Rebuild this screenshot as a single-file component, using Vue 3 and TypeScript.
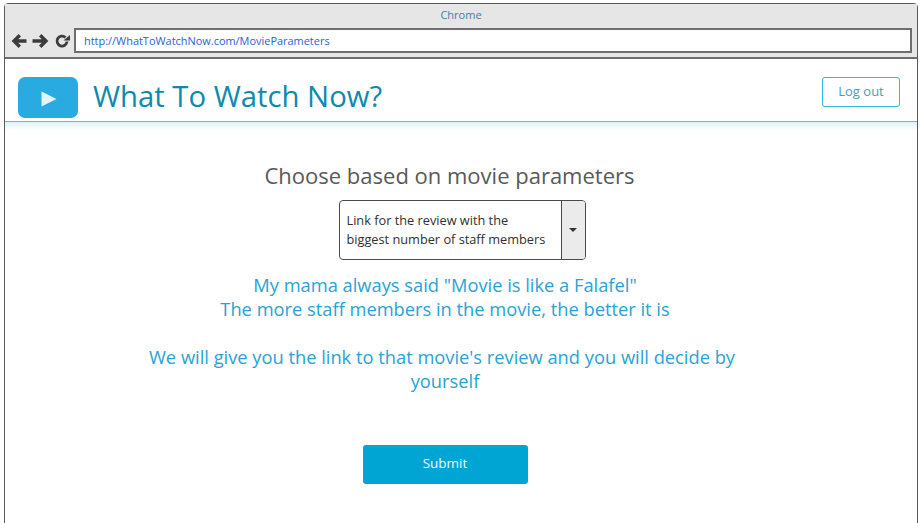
<script setup lang="ts">
const lines: string[] = ['My mama always said "Movie is like a Falafel"', 'The more staff members in the movie, the better it is']
</script>

<template>
  <div class="page">
    <div class="window">
      <div class="chrome">
        <div class="chrome-title">Chrome</div>
        <div class="nav">
          <svg class="nav-icons" width="62" height="18" viewBox="0 0 62 18">
            <path d="M16.500 9H4.500M9.800 3.200 4 9l5.800 5.800" fill="none" stroke="#3c3c3c" stroke-width="3.400" />
            <path d="M22.500 9H35.500M30.200 3.200 36 9l-5.800 5.800" fill="none" stroke="#3c3c3c" stroke-width="3.400" />
            <path d="M57 9.500A5 5 0 1 1 55.500 5.500" fill="none" stroke="#3c3c3c" stroke-width="2.800" />
            <path d="M53.500 8.500 60 8.500 60 3Z" fill="#3c3c3c" />
          </svg>
          <div class="address">http://WhatToWatchNow.com/MovieParameters</div>
        </div>
      </div>
      <header class="header">
        <div class="brand">
          <div class="logo">
            <svg class="play" width="16" height="16" viewBox="0 0 16 16"><path d="M0.500 0.500 15.500 8 0.500 15.500Z" fill="#e4f4fb" /></svg>
          </div>
          <h1 class="title">What To Watch Now?</h1>
        </div>
        <button class="logout" type="button">Log out</button>
      </header>
      <div class="shade"></div>
      <main class="content">
        <h2 class="heading">Choose based on movie parameters</h2>
        <div class="select">
          <div class="select-text">Link for the review with the<br />biggest number of staff members</div>
          <div class="select-arrow"><span class="caret"></span></div>
        </div>
        <div class="message first">
          <p v-for="line in lines" :key="line">{{ line }}</p>
        </div>
        <p class="message note">We will give you the link to that movie's review and you will decide by yourself</p>
        <button class="submit" type="button">Submit</button>
      </main>
    </div>
  </div>
</template>

<style scoped>
.page {
  width: 923px;
  height: 523px;
  box-sizing: border-box;
  padding: 3px 5px 0 4px;
  overflow: hidden;
  background: #fff;
  font-family: "Open Sans", sans-serif;
}
.window {
  height: 530px;
  box-sizing: border-box;
  border: 1.500px solid #5a5a5a;
  border-radius: 4px 4px 0 0;
  background: #fff;
}
.chrome {
  height: 55px;
  box-sizing: border-box;
  background: #e6e6e6;
  border-bottom: 2px solid #6e6e6e;
}
.chrome-title {
  height: 24px;
  line-height: 22px;
  text-align: center;
  font-size: 11px;
  color: #3a80a8;
}
.nav {
  display: flex;
  align-items: center;
  padding-right: 5px;
}
.nav-icons {
  margin-left: 5px;
  flex: none;
  margin-right: 2px;
}
.address {
  flex: 1;
  height: 25px;
  box-sizing: border-box;
  border: 2px solid #6f6f6f;
  background: #fff;
  padding-left: 8px;
  line-height: 21px;
  font-size: 10.950px;
  color: #2a62d8;
}
.header {
  height: 63px;
  box-sizing: border-box;
  display: flex;
  align-items: flex-start;
  justify-content: space-between;
  padding: 18px 17px 0 13px;
  border-bottom: 1px solid #55c1e2;
}
.brand {
  display: flex;
  align-items: center;
  gap: 15px;
}
.logo {
  width: 60px;
  height: 41px;
  border-radius: 7px;
  background: #29abe2;
  display: flex;
  align-items: center;
  justify-content: center;
}
.play {
  margin: 2px 0 0 2px;
}
.title {
  margin: 0 0 2px;
  font-size: 29.300px;
  font-weight: 400;
  line-height: 39px;
  color: #0d8ab0;
}
.logout {
  width: 78px;
  height: 30px;
  padding: 0 0 2px;
  border: 1px solid #33b5dc;
  border-radius: 3px;
  background: #fff;
  color: #4a9cb8;
  font-family: inherit;
  font-size: 13px;
}
.shade {
  height: 8px;
  background: linear-gradient(#dff1f7, #fff);
}
.content {
  display: flex;
  flex-direction: column;
  align-items: center;
  padding-right: 32px;
}
.heading {
  margin: 30px 0 0 9px;
  font-size: 22px;
  font-weight: 400;
  line-height: 30px;
  color: #595959;
}
.select {
  margin: 10px 0 0 34px;
  width: 247px;
  height: 60px;
  box-sizing: border-box;
  display: flex;
  border: 1px solid #4a4a4a;
  border-radius: 4px;
  overflow: hidden;
}
.select-text {
  flex: 1;
  padding: 10px 0 0 7px;
  font-size: 12.750px;
  line-height: 19px;
  color: #303030;
}
.select-arrow {
  width: 23px;
  border-left: 1px solid #4a4a4a;
  background: #ebebeb;
  display: flex;
  align-items: center;
  justify-content: center;
}
.caret {
  width: 0;
  height: 0;
  border-left: 4px solid transparent;
  border-right: 4px solid transparent;
  border-top: 4px solid #333;
}
.message {
  margin: 0;
  font-size: 18.300px;
  line-height: 24px;
  color: #29a3d6;
  text-align: center;
}
.message p {
  margin: 0;
}
.first {
  margin-top: 13px;
}
.note {
  width: 600px;
  margin-top: 24px;
  text-indent: -6px;
}
.submit {
  margin-top: 52px;
  width: 165px;
  height: 39px;
  padding: 0 0 3px;
  border: 0;
  border-radius: 3px;
  background: #00a5d4;
  color: #eef9fd;
  font-family: inherit;
  font-size: 13.500px;
}
</style>
